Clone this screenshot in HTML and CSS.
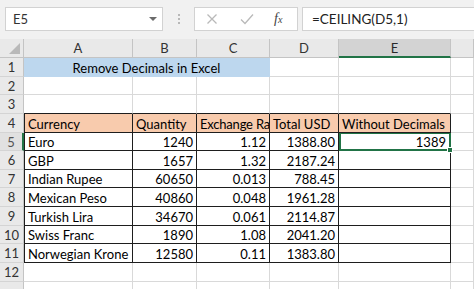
FILE: index.html
```html
<!DOCTYPE html>
<html lang="en">

<head>
    <meta charset="UTF-8">
    <title>Remove Decimals in Excel</title>
    <link rel="stylesheet" href="styles.css">
</head>

<body>
    <div class="toolbar">
        <div class="name-box">
            <span>E5</span>
            <span class="caret"></span>
        </div>
        <div class="grip">
            <i></i><i></i><i></i>
        </div>
        <div class="fn-box">
            <svg class="fn-icon" width="12" height="12" viewBox="0 0 12 12">
                <path d="M1.5 1.5 L10.5 10.5 M10.5 1.5 L1.5 10.5" stroke="#b9b9b9" stroke-width="1.3" fill="none" />
            </svg>
            <svg class="fn-icon" width="14" height="12" viewBox="0 0 14 12">
                <path d="M1 6.5 L5 10.5 L13 1.5" stroke="#b9b9b9" stroke-width="1.3" fill="none" />
            </svg>
            <span class="fx">f<small>x</small></span>
        </div>
        <div class="formula">=CEILING(D5,1)</div>
    </div>

    <div class="sheet">
        <!-- column headers -->
        <div class="corner"></div>
        <div class="col-head">A</div>
        <div class="col-head">B</div>
        <div class="col-head">C</div>
        <div class="col-head">D</div>
        <div class="col-head active">E</div>
        <div class="col-head"></div>

        <!-- row 1 -->
        <div class="row-head">1</div>
        <div class="cell title">Remove Decimals in Excel</div>
        <div class="cell"></div>
        <div class="cell"></div>
        <div class="cell"></div>

        <!-- row 2 -->
        <div class="row-head">2</div>
        <div class="cell"></div>
        <div class="cell"></div>
        <div class="cell"></div>
        <div class="cell"></div>
        <div class="cell"></div>
        <div class="cell"></div>

        <!-- row 3 -->
        <div class="row-head">3</div>
        <div class="cell above"></div>
        <div class="cell above"></div>
        <div class="cell above"></div>
        <div class="cell above"></div>
        <div class="cell above"></div>
        <div class="cell"></div>

        <!-- row 4 -->
        <div class="row-head">4</div>
        <div class="cell tb first head">Currency</div>
        <div class="cell tb head">Quantity</div>
        <div class="cell tb head tight">Exchange Ra</div>
        <div class="cell tb head">Total USD</div>
        <div class="cell tb head">Without Decimals</div>
        <div class="cell"></div>

        <!-- row 5 -->
        <div class="row-head current">5</div>
        <div class="cell tb first">Euro</div>
        <div class="cell tb num">1240</div>
        <div class="cell tb num">1.12</div>
        <div class="cell tb num">1388.80</div>
        <div class="cell tb num selected">1389<span class="handle"></span></div>
        <div class="cell"></div>

        <!-- row 6 -->
        <div class="row-head">6</div>
        <div class="cell tb first">GBP</div>
        <div class="cell tb num">1657</div>
        <div class="cell tb num">1.32</div>
        <div class="cell tb num">2187.24</div>
        <div class="cell tb"></div>
        <div class="cell"></div>

        <!-- row 7 -->
        <div class="row-head">7</div>
        <div class="cell tb first">Indian Rupee</div>
        <div class="cell tb num">60650</div>
        <div class="cell tb num">0.013</div>
        <div class="cell tb num">788.45</div>
        <div class="cell tb"></div>
        <div class="cell"></div>

        <!-- row 8 -->
        <div class="row-head">8</div>
        <div class="cell tb first">Mexican Peso</div>
        <div class="cell tb num">40860</div>
        <div class="cell tb num">0.048</div>
        <div class="cell tb num">1961.28</div>
        <div class="cell tb"></div>
        <div class="cell"></div>

        <!-- row 9 -->
        <div class="row-head">9</div>
        <div class="cell tb first">Turkish Lira</div>
        <div class="cell tb num">34670</div>
        <div class="cell tb num">0.061</div>
        <div class="cell tb num">2114.87</div>
        <div class="cell tb"></div>
        <div class="cell"></div>

        <!-- row 10 -->
        <div class="row-head">10</div>
        <div class="cell tb first">Swiss Franc</div>
        <div class="cell tb num">1890</div>
        <div class="cell tb num">1.08</div>
        <div class="cell tb num">2041.20</div>
        <div class="cell tb"></div>
        <div class="cell"></div>

        <!-- row 11 -->
        <div class="row-head">11</div>
        <div class="cell tb first">Norwegian Krone</div>
        <div class="cell tb num">12580</div>
        <div class="cell tb num">0.11</div>
        <div class="cell tb num">1383.80</div>
        <div class="cell tb"></div>
        <div class="cell"></div>

        <!-- row 12 -->
        <div class="row-head">12</div>
        <div class="cell"></div>
        <div class="cell"></div>
        <div class="cell"></div>
        <div class="cell"></div>
        <div class="cell"></div>
        <div class="cell"></div>

        <!-- row 13, only its top edge shows -->
        <div class="row-head"></div>
        <div class="cell"></div>
        <div class="cell"></div>
        <div class="cell"></div>
        <div class="cell"></div>
        <div class="cell"></div>
        <div class="cell"></div>
    </div>
</body>

</html>
```

FILE: styles.css
```css
* {
    box-sizing: border-box;
}

body {
    margin: 0;
    width: 474px;
    height: 289px;
    overflow: hidden;
    background-color: #ffffff;
    font-family: 'Lato', 'Liberation Sans', sans-serif;
}

/* formula bar */

.toolbar {
    display: flex;
    align-items: flex-start;
    height: 39px;
    padding: 7px 0 0 5px;
    background-color: #f1f1f1;
}

.name-box {
    display: flex;
    align-items: center;
    justify-content: space-between;
    width: 158px;
    height: 24px;
    padding: 0 5px 0 7px;
    background-color: #ffffff;
    border: 1px solid #d2d2d2;
    color: #333;
    font-size: 13px;
}

.caret {
    width: 0;
    height: 0;
    border-left: 4px solid transparent;
    border-right: 4px solid transparent;
    border-top: 4px solid #6b6b6b;
}

.grip {
    display: flex;
    flex-direction: column;
    gap: 2px;
    width: 31px;
    padding-top: 7px;
    align-items: center;
}

.grip i {
    width: 2px;
    height: 2px;
    background-color: #b8b8b8;
}

.fn-box {
    display: flex;
    align-items: center;
    width: 104px;
    height: 24px;
    padding-left: 11px;
    background-color: #ffffff;
    border: 1px solid #d2d2d2;
}

.fn-icon {
    margin-right: 22px;
}

.fn-icon + .fn-icon {
    margin-right: 20px;
}

.fx {
    font-family: 'Liberation Serif', serif;
    font-style: italic;
    font-size: 14px;
    color: #444;
}

.fx small {
    font-size: 10px;
}

.formula {
    flex: 1;
    height: 24px;
    margin-left: 4px;
    padding: 3px 0 0 9px;
    background-color: #ffffff;
    border: 1px solid #d2d2d2;
    border-right: none;
    font-size: 13.5px;
    color: #222;
}

/* grid */

.sheet {
    display: grid;
    grid-template-columns: 24px 109px 64px 73px 69px 112px 1fr;
    grid-template-rows: 19px 19px 18px 19px 19px 18px 19px 18px 19px 19px 18px 19px 19px 19px;
    font-size: 13px;
    color: #000;
}

.corner {
    position: relative;
    background-color: #e9e9e9;
    border-right: 1px solid #c4c4c4;
    border-bottom: 1px solid #c4c4c4;
}

.corner::after {
    content: '';
    position: absolute;
    right: 3px;
    bottom: 3px;
    width: 0;
    height: 0;
    border-left: 11px solid transparent;
    border-bottom: 11px solid #b9b9b9;
}

.col-head {
    display: flex;
    align-items: center;
    justify-content: center;
    background-color: #e9e9e9;
    border-right: 1px solid #c4c4c4;
    border-bottom: 1px solid #c4c4c4;
    color: #333;
    font-size: 13px;
}

.col-head.active {
    background-color: #d3d3d3;
    border-bottom: 2px solid #217346;
    color: #2a2a2a;
}

.row-head {
    display: flex;
    align-items: center;
    justify-content: center;
    background-color: #e9e9e9;
    border-right: 1px solid #c4c4c4;
    border-bottom: 1px solid #d4d4d4;
    color: #333;
    font-size: 13px;
}

.row-head.current {
    background-color: #e1e1e1;
    border-right: 2px solid #217346;
    color: #555;
}

.cell {
    display: flex;
    align-items: center;
    padding: 1px 3px 0;
    white-space: nowrap;
    overflow: hidden;
    border-right: 1px solid #d9d9d9;
    border-bottom: 1px solid #d9d9d9;
}

.title {
    grid-column: span 3;
    justify-content: center;
    background-color: #bdd7ee;
    border-color: #bdd7ee;
}

.above {
    border-bottom-color: #1e1e1e;
}

.tb {
    border-right-color: #1e1e1e;
    border-bottom-color: #1e1e1e;
}

.tb.first {
    border-left: 1px solid #1e1e1e;
}

.head {
    background-color: #f8cbad;
}

.tight {
    padding-right: 0;
    letter-spacing: -0.2px;
}

.num {
    justify-content: flex-end;
}

.selected {
    position: relative;
    overflow: visible;
    border: 2px solid #217346;
    border-top-width: 1px;
    padding-right: 3px;
}

.handle {
    position: absolute;
    right: -4px;
    bottom: -4px;
    width: 6px;
    height: 6px;
    background-color: #217346;
    border: 1px solid #ffffff;
}
```
